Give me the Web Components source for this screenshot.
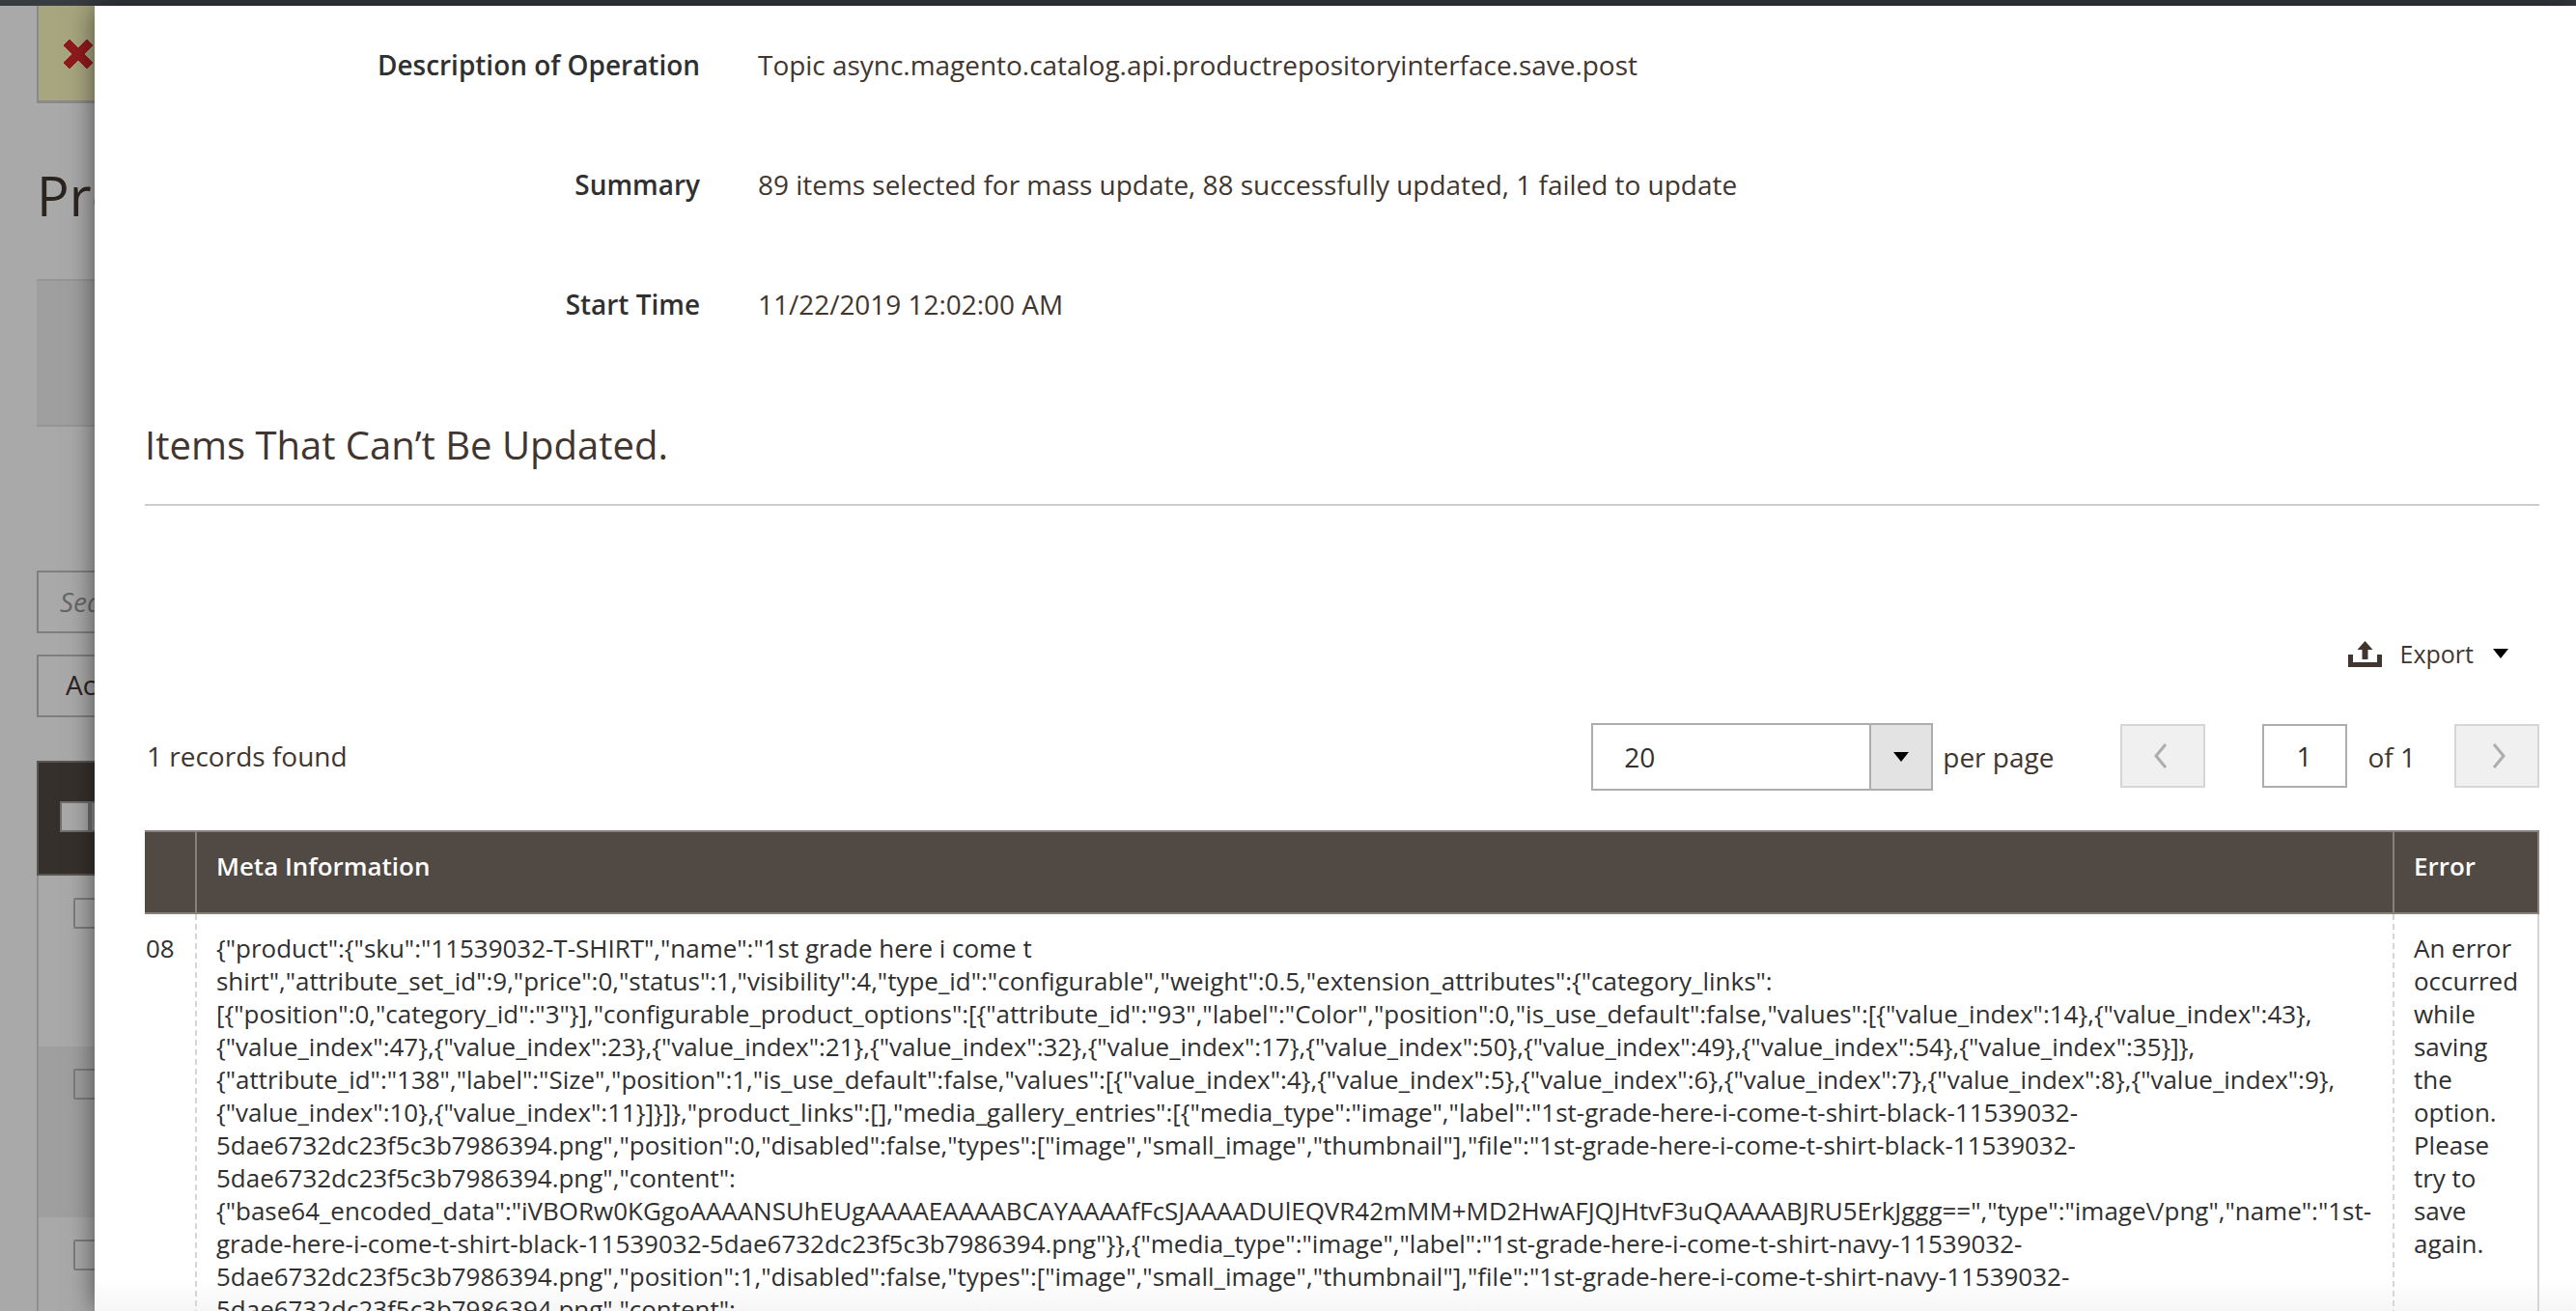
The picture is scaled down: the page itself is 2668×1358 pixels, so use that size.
<!DOCTYPE html>
<html lang="en">
<head>
<meta charset="utf-8">
<title>Bulk action details</title>
<style>
html, body { margin: 0; height: 100%; overflow: hidden; background: #a9a9a9; font-family: "Open Sans", sans-serif; }
</style>
</head>
<body>
<admin-page></admin-page>
<slide-modal>
  <detail-row label="Description of Operation">Topic async.magento.catalog.api.productrepositoryinterface.save.post</detail-row>
  <detail-row label="Summary">89 items selected for mass update, 88 successfully updated, 1 failed to update</detail-row>
  <detail-row label="Start Time">11/22/2019 12:02:00 AM</detail-row>
  <section-title>Items That Can’t Be Updated.</section-title>
  <export-button>Export</export-button>
  <grid-toolbar records="1 records found" size="20" page="1" pages="1"></grid-toolbar>
  <error-grid></error-grid>
</slide-modal>

<script>
// page that sits greyed out behind the modal
customElements.define('admin-page',
  class extends HTMLElement {
    constructor () {
      super()
      this.attachShadow({ mode: 'open' })
      this.shadowRoot.innerHTML = `
      <style>
      :host { display: block; height: 1358px; overflow: hidden; box-sizing: border-box; }
      .top { height: 6px; background: #373c41; }
      .wrap { padding-left: 38px; width: 400px; }
      .message { height: 101px; box-sizing: border-box; background: #a8a67f; border-left: 2px solid #8a8a8a; border-bottom: 3px solid #8a8a8a; padding: 35px 0 0 26px; }
      .message svg { display: block; }
      h1 { margin: 57px 0 0; font: 400 56px/76px "Open Sans", sans-serif; color: #2c2420; }
      .filters { margin-top: 49px; height: 153px; box-sizing: border-box; background: #9f9f9f; border-top: 2px solid #959595; border-bottom: 2px solid #959595; }
      .search { margin-top: 149px; height: 65px; box-sizing: border-box; border: 2px solid #7f7f7f; padding-left: 22px; font: italic 28px/61px "Open Sans", sans-serif; color: #666; }
      .actions { margin-top: 22px; height: 65px; box-sizing: border-box; border: 2px solid #7f7f7f; padding-left: 28px; font: 28px/58px "Open Sans", sans-serif; color: #2c2420; }
      .head { margin-top: 45px; height: 119px; box-sizing: border-box; background: #35302c; border: 2px solid #5a5552; padding: 40px 0 0 22px; display: flex; }
      .head i { width: 31px; height: 32px; box-sizing: border-box; background: #a9a9a9; border: 2px solid #6e6e6e; }
      .head i + i { background: #8c8c8c; }
      .row { box-sizing: border-box; border-left: 2px solid #8f8f8f; padding: 23px 0 0 36px; height: 177px; }
      .row.alt { background: #9f9f9f; }
      .row i { display: block; width: 32px; height: 32px; box-sizing: border-box; border: 2px solid #7c7c7c; border-radius: 2px; }
      </style>
      <div class="top"></div>
      <div class="wrap">
        <div class="message">
          <svg width="30" height="30" viewBox="0 0 30 30"><path d="M6 0 15 9 24 0 30 6 21 15 30 24 24 30 15 21 6 30 0 24 9 15 0 6Z" fill="#8f1a1e" stroke="#8f1a1e" stroke-width="1" stroke-linejoin="round"/></svg>
        </div>
        <h1>Products</h1>
        <div class="filters"></div>
        <div class="search">Search by keyword</div>
        <div class="actions">Actions</div>
        <div class="head"><i></i><i></i></div>
        <div class="row"><i></i></div>
        <div class="row alt"><i></i></div>
        <div class="row"><i></i></div>
      </div>
    `
    }
  })

customElements.define('slide-modal',
  class extends HTMLElement {
    constructor () {
      super()
      this.attachShadow({ mode: 'open' })
      this.shadowRoot.innerHTML = `
      <style>
      :host { position: absolute; left: 98px; top: 6px; right: 0; bottom: 0; display: block; background: #fff; overflow: hidden; box-shadow: 0 0 26px rgba(0, 0, 0, .55); }
      .content { position: relative; z-index: 1; padding: 1px 38px 0 52px; }
      .fade { position: absolute; left: 0; right: 0; bottom: 0; height: 34px; background: linear-gradient(rgba(240, 240, 240, 0), rgba(240, 240, 240, .6)); }
      </style>
      <div class="fade"></div>
      <div class="content"><slot></slot></div>
    `
    }
  })

customElements.define('detail-row',
  class extends HTMLElement {
    constructor () {
      super()
      this.attachShadow({ mode: 'open' })
      this.shadowRoot.innerHTML = `
      <style>
      :host { display: grid; grid-template-columns: 575px auto; column-gap: 60px; height: 124px; padding-top: 42px; box-sizing: border-box; font: 27.95px/36px "Open Sans", sans-serif; color: #41362f; }
      .label { text-align: right; font-weight: 600; color: #303030; }
      </style>
      <div class="label"></div>
      <div><slot></slot></div>
    `
      this.shadowRoot.querySelector('.label').textContent = this.getAttribute('label')
    }
  })

customElements.define('section-title',
  class extends HTMLElement {
    constructor () {
      super()
      this.attachShadow({ mode: 'open' })
      this.shadowRoot.innerHTML = `
      <style>
      :host { display: block; margin-top: 56px; height: 89px; box-sizing: border-box; border-bottom: 2px solid #cccccc; font: 40px/52px "Open Sans", sans-serif; color: #41362f; }
      </style>
      <slot></slot>
    `
    }
  })

customElements.define('export-button',
  class extends HTMLElement {
    constructor () {
      super()
      this.attachShadow({ mode: 'open' })
      this.shadowRoot.innerHTML = `
      <style>
      :host { display: flex; justify-content: flex-end; align-items: center; margin-top: 135px; height: 36px; padding-right: 32px; font: 25px/36px "Open Sans", sans-serif; color: #41362f; }
      svg { display: block; margin-right: 19px; }
      .caret { width: 0; height: 0; margin-left: 20px; border: 8px solid transparent; border-top: 10px solid #000; border-bottom: 0; }
      </style>
      <svg width="35" height="27" viewBox="0 0 35 27"><path d="M17.5 0 25.5 9H20.5V19H14.5V9H9.5ZM0 14H5V22H30V14H35V27H0Z" fill="#41362f"/></svg>
      <span><slot></slot></span>
      <span class="caret"></span>
    `
    }
  })

customElements.define('grid-toolbar',
  class extends HTMLElement {
    constructor () {
      super()
      this.attachShadow({ mode: 'open' })
      this.shadowRoot.innerHTML = `
      <style>
      :host { display: flex; align-items: center; margin-top: 53px; height: 70px; padding-left: 2px; font: 28px/36px "Open Sans", sans-serif; color: #41362f; }
      .records { flex: 1; }
      .select { display: flex; box-sizing: border-box; width: 354px; height: 70px; margin-top: 2px; border: 2px solid #adadad; color: #303030; }
      .value { flex: 1; padding-left: 32px; line-height: 66px; }
      .arrow { width: 62px; background: #e3e3e3; border-left: 2px solid #adadad; display: flex; align-items: center; justify-content: center; }
      .arrow::after { content: ""; border: 8px solid transparent; border-top: 10px solid #000; border-bottom: 0; }
      .per { margin: 2px 69px 0 10px; }
      .nav { width: 88px; height: 66px; box-sizing: border-box; background: #f0f0f0; border: 2px solid #d6d6d6; display: flex; align-items: center; justify-content: center; }
      .nav .back { margin-right: 6px; }
      .nav .next { margin-left: 6px; }
      .num { width: 88px; height: 66px; box-sizing: border-box; margin-left: 59px; padding-right: 2px; border: 2px solid #adadad; text-align: center; line-height: 62px; color: #303030; }
      .of { margin: 2px 40px 0 21px; }
      </style>
      <div class="records"></div>
      <div class="select"><div class="value"></div><div class="arrow"></div></div>
      <div class="per">per page</div>
      <div class="nav"><svg class="back" width="18" height="28" viewBox="0 0 18 28"><path d="M15 2 5 14 15 26" fill="none" stroke="#adadad" stroke-width="3"/></svg></div>
      <div class="num"></div>
      <div class="of"></div>
      <div class="nav"><svg class="next" width="18" height="28" viewBox="0 0 18 28"><path d="M3 2 13 14 3 26" fill="none" stroke="#adadad" stroke-width="3"/></svg></div>
    `
      this.shadowRoot.querySelector('.records').textContent = this.getAttribute('records')
      this.shadowRoot.querySelector('.value').textContent = this.getAttribute('size')
      this.shadowRoot.querySelector('.num').textContent = this.getAttribute('page')
      this.shadowRoot.querySelector('.of').textContent = `of ${this.getAttribute('pages')}`
    }
  })

customElements.define('error-grid',
  class extends HTMLElement {
    constructor () {
      super()
      this.attachShadow({ mode: 'open' })
      const lines = [
        '{"product":{"sku":"11539032-T-SHIRT","name":"1st grade here i come t',
        'shirt","attribute_set_id":9,"price":0,"status":1,"visibility":4,"type_id":"configurable","weight":0.5,"extension_attributes":{"category_links":',
        '[{"position":0,"category_id":"3"}],"configurable_product_options":[{"attribute_id":"93","label":"Color","position":0,"is_use_default":false,"values":[{"value_index":14},{"value_index":43},',
        '{"value_index":47},{"value_index":23},{"value_index":21},{"value_index":32},{"value_index":17},{"value_index":50},{"value_index":49},{"value_index":54},{"value_index":35}]},',
        '{"attribute_id":"138","label":"Size","position":1,"is_use_default":false,"values":[{"value_index":4},{"value_index":5},{"value_index":6},{"value_index":7},{"value_index":8},{"value_index":9},',
        '{"value_index":10},{"value_index":11}]}]},"product_links":[],"media_gallery_entries":[{"media_type":"image","label":"1st-grade-here-i-come-t-shirt-black-11539032-',
        '5dae6732dc23f5c3b7986394.png","position":0,"disabled":false,"types":["image","small_image","thumbnail"],"file":"1st-grade-here-i-come-t-shirt-black-11539032-',
        '5dae6732dc23f5c3b7986394.png","content":',
        '{"base64_encoded_data":"iVBORw0KGgoAAAANSUhEUgAAAAEAAAABCAYAAAAfFcSJAAAADUlEQVR42mMM+MD2HwAFJQJHtvF3uQAAAABJRU5ErkJggg==","type":"image\\/png","name":"1st-',
        'grade-here-i-come-t-shirt-black-11539032-5dae6732dc23f5c3b7986394.png"}},{"media_type":"image","label":"1st-grade-here-i-come-t-shirt-navy-11539032-',
        '5dae6732dc23f5c3b7986394.png","position":1,"disabled":false,"types":["image","small_image","thumbnail"],"file":"1st-grade-here-i-come-t-shirt-navy-11539032-',
        '5dae6732dc23f5c3b7986394.png","content":'
      ]
      this.shadowRoot.innerHTML = `
      <style>
      :host { display: block; margin-top: 42px; }
      table { width: 2480px; table-layout: fixed; border-collapse: collapse; font: 25.96px/34px "Open Sans", sans-serif; color: #303030; }
      th { height: 85px; padding: 0 20px 14px; box-sizing: border-box; background: #514943; border: 2px solid #8a807b; color: #fff; font-weight: 600; text-align: left; }
      th:first-child { border-left: 0; }
      td { vertical-align: top; padding: 18px 20px 20px; border-left: 2px dashed #d6d6d6; border-right: 2px dashed #d6d6d6; }
      td.id { padding: 18px 0 0 1px; border-left: 0; }
      td.meta { white-space: nowrap; }
      td.err { border-right: 2px solid #d6d6d6; }
      </style>
      <table>
        <colgroup><col style="width: 53px"><col><col style="width: 150px"></colgroup>
        <thead><tr><th></th><th>Meta Information</th><th>Error</th></tr></thead>
        <tbody><tr>
          <td class="id">08</td>
          <td class="meta">${lines.join('<br>')}</td>
          <td class="err">An error occurred while saving the option. Please try to save again.</td>
        </tr></tbody>
      </table>
    `
    }
  })
</script>
</body>
</html>
